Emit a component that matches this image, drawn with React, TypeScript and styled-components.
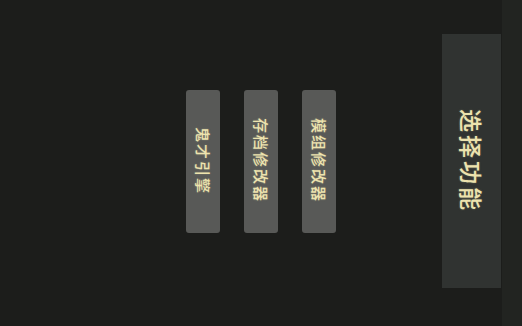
import React, { FC } from 'react';
import styled, { createGlobalStyle } from 'styled-components';

const GlobalStyle = createGlobalStyle`
  html, body {
    margin: 0;
    padding: 0;
    background: #1c1d1b;
    overflow: hidden;
  }
  body {
    font-family: "Noto Sans CJK SC", "Noto Sans", sans-serif;
  }
`;

const Screen = styled.div`
  display: flex;
  width: 522px;
  height: 326px;
  background: #1c1d1b;
`;

const Stage = styled.div`
  flex: 1;
  display: flex;
  align-items: center;
  justify-content: flex-end;
  padding: 0 1px 4px 0;
`;

const SideStrip = styled.div`
  width: 20px;
  background: #222421;
`;

const ToolGroup = styled.div`
  display: flex;
  gap: 24px;
  margin-right: 106px;
`;

const VerticalLabel = styled.span<{ $size: number; $spacing: number }>`
  writing-mode: vertical-rl;
  text-orientation: sideways;
  font-size: ${(p) => p.$size}px;
  font-weight: 500;
  letter-spacing: ${(p) => p.$spacing}px;
  color: #ede3ae;
  line-height: 1;
  text-shadow: 0 0 2px rgba(235, 225, 172, 0.35);
`;

const ToolButton = styled.button`
  width: 34px;
  height: 143px;
  padding: 0;
  border: none;
  border-radius: 3px;
  background: #585957;
  display: flex;
  align-items: center;
  justify-content: center;
  cursor: pointer;
  font-family: inherit;
`;

const TitlePanel = styled.div`
  width: 59px;
  height: 254px;
  background: #303331;
  display: flex;
  align-items: center;
  justify-content: center;
`;

const tools = ['鬼才引擎', '存档修改器', '模组修改器'];

const App: FC = () => (
  <>
    <GlobalStyle />
    <Screen>
      <Stage>
        <ToolGroup>
          {tools.map((name) => (
            <ToolButton key={name}>
              <VerticalLabel $size={15} $spacing={2}>
                {name}
              </VerticalLabel>
            </ToolButton>
          ))}
        </ToolGroup>
        <TitlePanel>
          <VerticalLabel $size={23} $spacing={3}>
            选择功能
          </VerticalLabel>
        </TitlePanel>
      </Stage>
      <SideStrip />
    </Screen>
  </>
);

export default App;
